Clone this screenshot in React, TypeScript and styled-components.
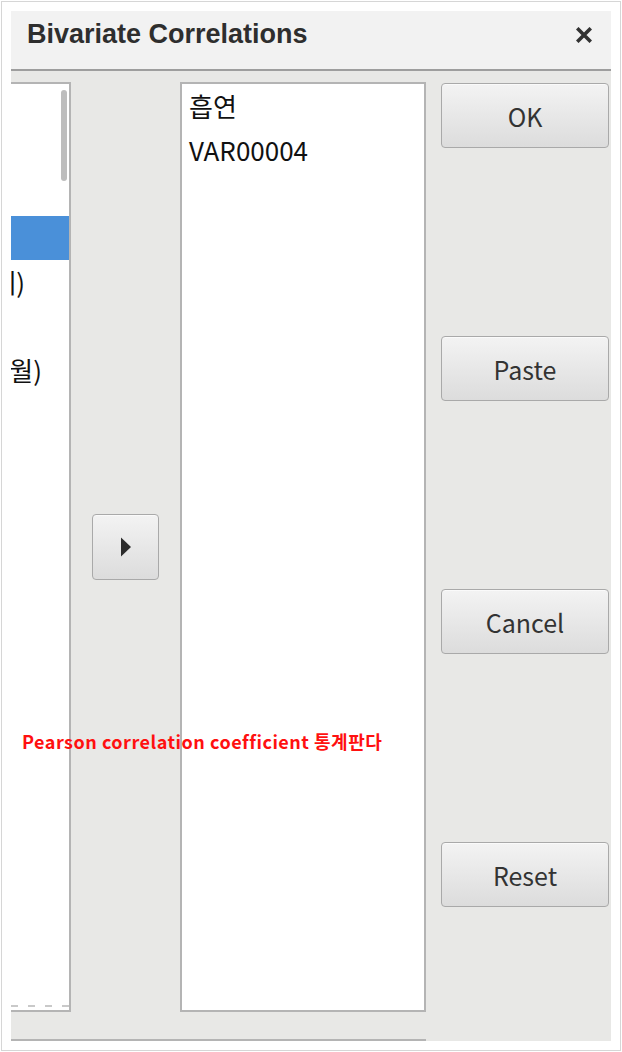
import React from "react";
import styled, { createGlobalStyle } from "styled-components";

const Global = createGlobalStyle`
  html, body { margin: 0; padding: 0; background: #ffffff; }
  #root { width: 622px; height: 1052px; }
  * { box-sizing: border-box; }
`;

const Page = styled.div`
  width: 622px;
  height: 1052px;
  padding: 1px;
  background: #ffffff;
`;

const Frame = styled.div`
  width: 100%;
  height: 100%;
  border: 1px solid #d6d6d6;
  padding: 9px;
  background: #ffffff;
`;

const Dialog = styled.div`
  width: 600px;
  height: 1030px;
  display: flex;
  flex-direction: column;
  overflow: hidden;
  background: #e8e8e6;
`;

const TitleBar = styled.div`
  height: 60px;
  flex: none;
  display: flex;
  justify-content: space-between;
  align-items: flex-start;
  padding: 10px 19px 0 16px;
  background: #f2f2f2;
  border-bottom: 2px solid #9e9e9e;
`;

const Title = styled.h1`
  margin: 0;
  font-family: "Liberation Sans", Arial, sans-serif;
  font-weight: 700;
  font-size: 27px;
  line-height: 27px;
  color: #2e2e2e;
`;

const CloseButton = styled.button`
  margin-top: 6px;
  width: 16px;
  height: 16px;
  padding: 0;
  border: none;
  background: transparent;
  display: flex;
  cursor: pointer;
`;

const Body = styled.div`
  position: relative;
  flex: 1;
  padding: 11px 2px 0 0;
  display: grid;
  grid-template-columns: 60px 109px 246px 183px;
  grid-template-rows: 930px 120px;
  row-gap: 27px;
`;

const LeftList = styled.div`
  position: relative;
  height: 930px;
  overflow: hidden;
  background: #ffffff;
  border-top: 2px solid #b4b4b4;
  border-right: 2px solid #b4b4b4;
  border-bottom: 2px solid #b4b4b4;
  display: flex;
  flex-direction: column;
`;

const ScrollThumb = styled.div`
  position: absolute;
  top: 6px;
  right: 2px;
  width: 6px;
  height: 91px;
  border-radius: 3px;
  background: #bdbdbd;
`;

const ClipRow = styled.div<{ $selected?: boolean; $inset: number }>`
  height: 44px;
  flex: none;
  display: flex;
  justify-content: flex-end;
  padding-right: ${(p) => p.$inset}px;
  background: ${(p) => (p.$selected ? "#4a90d9" : "transparent")};
  color: ${(p) => (p.$selected ? "#ffffff" : "#111111")};
  font-family: "Noto Sans CJK KR", "Noto Sans", sans-serif;
  font-size: 26px;
  line-height: 44px;
  white-space: nowrap;
  overflow: hidden;
`;

const ClipText = styled.span`
  flex: none;
`;

const DashedEdge = styled.div`
  margin-top: auto;
  margin-bottom: 3px;
  height: 2px;
  flex: none;
  background: repeating-linear-gradient(
    to right,
    #c9c9c9 0px,
    #c9c9c9 7px,
    transparent 7px,
    transparent 17px
  );
`;

const MoveColumn = styled.div`
  display: flex;
  align-items: center;
  justify-content: center;
`;

const ArrowButton = styled.button`
  width: 67px;
  height: 66px;
  padding: 0;
  display: flex;
  align-items: center;
  justify-content: center;
  border: 1px solid #a9a9a9;
  border-radius: 4px;
  background: linear-gradient(to bottom, #f3f3f3, #dcdcdc);
  box-shadow: inset 0 1px 0 #fafafa;
  cursor: pointer;
`;

const TargetList = styled.div`
  height: 930px;
  background: #ffffff;
  border: 2px solid #b4b4b4;
  padding-left: 7px;
  display: flex;
  flex-direction: column;
`;

const TargetRow = styled.div`
  height: 44px;
  font-family: "Noto Sans CJK KR", "Noto Sans", sans-serif;
  font-size: 26px;
  line-height: 44px;
  color: #111111;
  white-space: nowrap;
`;

const ButtonColumn = styled.div`
  padding: 1px 0 0 15px;
  display: flex;
  flex-direction: column;
  gap: 188px;
`;

const ActionButton = styled.button`
  width: 168px;
  height: 65px;
  padding: 0;
  border: 1px solid #a9a9a9;
  border-radius: 4px;
  background: linear-gradient(to bottom, #f3f3f3, #dcdcdc);
  box-shadow: inset 0 1px 0 #fafafa;
  font-family: "Noto Sans CJK KR", "Noto Sans", sans-serif;
  font-size: 25px;
  color: #333333;
  cursor: pointer;
`;

const NextPanel = styled.div`
  grid-column: 1 / 4;
  background: #ffffff;
  border-top: 2px solid #b4b4b4;
`;

const Watermark = styled.div`
  position: absolute;
  left: 11px;
  top: 660px;
  font-family: "Noto Sans CJK KR", "Noto Sans", sans-serif;
  font-weight: 700;
  font-size: 18px;
  letter-spacing: 0.5px;
  line-height: 20px;
  color: #ff1010;
  white-space: nowrap;
  pointer-events: none;
`;

const sourceRows: { text: string; inset: number; selected?: boolean }[] = [
  { text: "", inset: 0 },
  { text: "", inset: 0 },
  { text: "", inset: 0 },
  { text: "", inset: 0, selected: true },
  { text: "나이(세)", inset: 44 },
  { text: "", inset: 0 },
  { text: "월평균소득(만원/월)", inset: 27 },
];

const targetRows = ["흡연", "VAR00004"];
const actions = ["OK", "Paste", "Cancel", "Reset"];

export default function App() {
  return (
    <>
      <Global />
      <Page>
        <Frame>
          <Dialog>
            <TitleBar>
              <Title>Bivariate Correlations</Title>
              <CloseButton aria-label="Close">
                <svg width="16" height="16" viewBox="0 0 16 16">
                  <path
                    d="M2.5 2.5 L13.5 13.5 M13.5 2.5 L2.5 13.5"
                    stroke="#333333"
                    strokeWidth="3.6"
                    strokeLinecap="square"
                  />
                </svg>
              </CloseButton>
            </TitleBar>
            <Body>
              <LeftList>
                {sourceRows.map((r, i) => (
                  <ClipRow key={i} $inset={r.inset} $selected={r.selected}>
                    <ClipText>{r.text}</ClipText>
                  </ClipRow>
                ))}
                <DashedEdge />
                <ScrollThumb />
              </LeftList>
              <MoveColumn>
                <ArrowButton aria-label="Move">
                  <svg width="12" height="20" viewBox="0 0 12 20">
                    <polygon points="1,0.5 11,10 1,19.5" fill="#2b2b2b" />
                  </svg>
                </ArrowButton>
              </MoveColumn>
              <TargetList>
                {targetRows.map((t) => (
                  <TargetRow key={t}>{t}</TargetRow>
                ))}
              </TargetList>
              <ButtonColumn>
                {actions.map((a) => (
                  <ActionButton key={a}>{a}</ActionButton>
                ))}
              </ButtonColumn>
              <NextPanel />
              <Watermark>Pearson correlation coefficient 통계판다</Watermark>
            </Body>
          </Dialog>
        </Frame>
      </Page>
    </>
  );
}
